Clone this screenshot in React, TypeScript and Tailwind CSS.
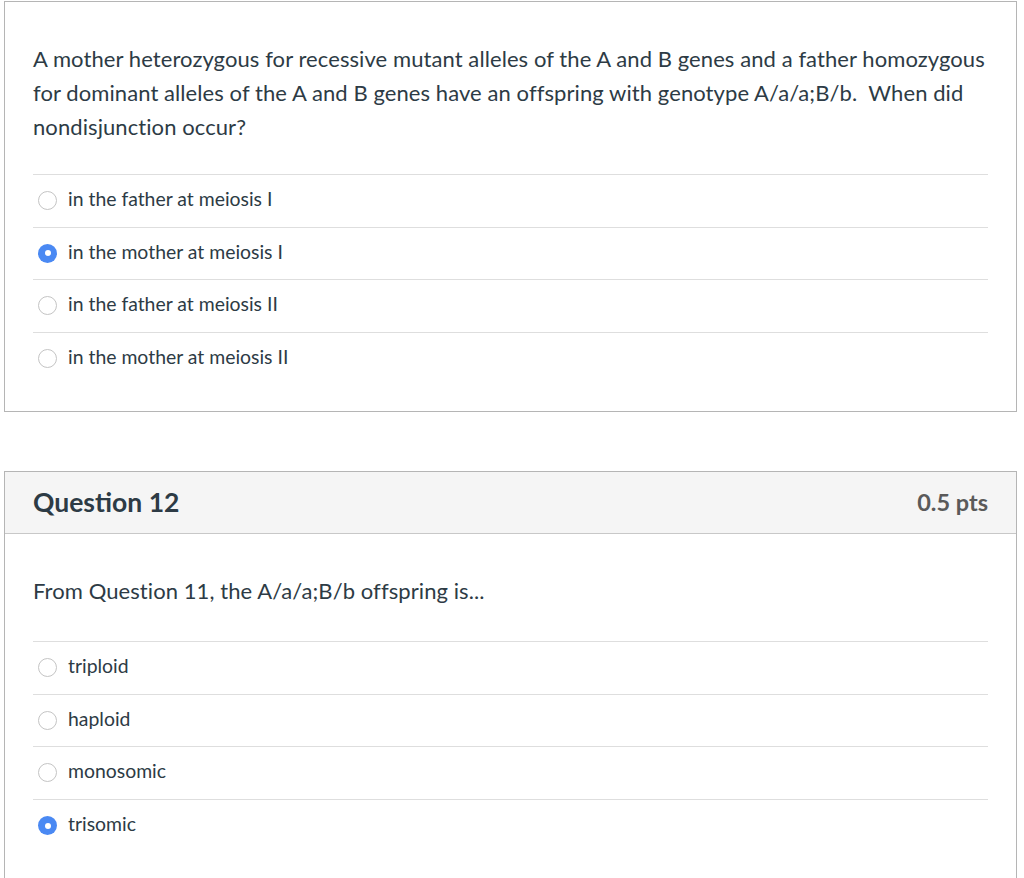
import React from 'react'

type Option = { label: string; selected?: boolean }

const Radio: React.FC<{ selected?: boolean }> = ({ selected }) =>
  selected ? (
    <span className="flex h-[19px] w-[19px] shrink-0 items-center justify-center rounded-full bg-[#4a89f3]">
      <span className="h-[6px] w-[6px] rounded-full bg-white" />
    </span>
  ) : (
    <span className="h-[19px] w-[19px] shrink-0 rounded-full border border-[#c4c4c4] bg-white" />
  )

const Answers: React.FC<{ options: Option[] }> = ({ options }) => (
  <div className="border-t border-[#dedede]">
    {options.map((o, i) => (
      <div
        key={o.label}
        className={`flex h-[52.5px] items-center gap-[11px] pl-[5px] ${i < options.length - 1 ? 'border-b border-[#dedede]' : ''}`}
      >
        <Radio selected={o.selected} />
        <span className="pb-[4px] text-[19.4px] leading-none text-[#2d3b45]">{o.label}</span>
      </div>
    ))}
  </div>
)

const App: React.FC = () => {
  const q11: Option[] = [
    { label: 'in the father at meiosis I' },
    { label: 'in the mother at meiosis I', selected: true },
    { label: 'in the father at meiosis II' },
    { label: 'in the mother at meiosis II' },
  ]
  const q12: Option[] = [
    { label: 'triploid' },
    { label: 'haploid' },
    { label: 'monosomic' },
    { label: 'trisomic', selected: true },
  ]

  return (
    <div className="h-[878px] overflow-hidden bg-white pl-[4px] pt-[1px] font-['Lato','Noto_Sans',sans-serif] text-[#2d3b45]">
      <div className="w-[1013px] border border-[#b5b5b5]">
        <div className="px-[28px] pb-[26px] pt-[40px]">
          <p className="text-[22px] leading-[34px] tracking-[0.08px]">
            A mother heterozygous for recessive mutant alleles of the A and B genes and a father homozygous
            for dominant alleles of the A and B genes have an offspring with genotype A/a/a;B/b.&nbsp; When did
            nondisjunction occur?
          </p>
          <div className="mt-[30px]">
            <Answers options={q11} />
          </div>
        </div>
      </div>

      <div className="mt-[59px] w-[1013px] border border-b-0 border-[#b5b5b5]">
        <div className="flex h-[62px] items-center justify-between border-b border-[#c8c8c8] bg-[#f5f5f5] px-[28px]">
          <h2 className="text-[26.5px] font-bold text-[#2d3b45]">Question 12</h2>
          <span className="text-[23.5px] font-bold text-[#5a5a5a]">0.5 pts</span>
        </div>
        <div className="px-[28px] pb-[40px] pt-[40px]">
          <p className="text-[22px] leading-[34px] tracking-[0.08px]">From Question 11, the A/a/a;B/b offspring is...</p>
          <div className="mt-[33px]">
            <Answers options={q12} />
          </div>
        </div>
      </div>
    </div>
  )
}

export default App
